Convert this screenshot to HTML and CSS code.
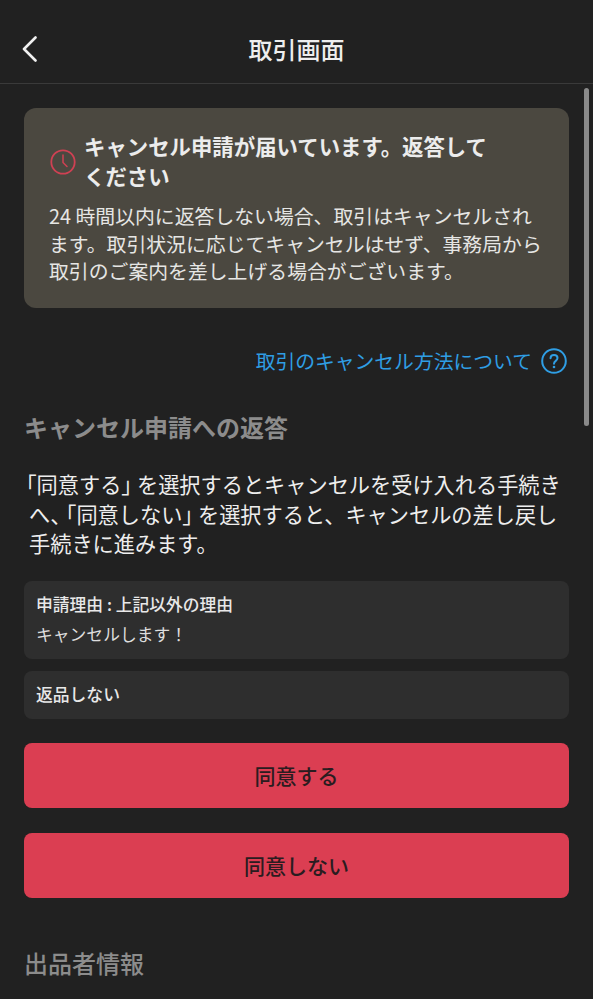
FILE: index.html
```html
<!DOCTYPE html>
<html lang="ja">
<head>
<meta charset="utf-8">
<title>取引画面</title>
<link rel="stylesheet" href="styles.css">
</head>
<body>
<div class="screen">
  <header class="topbar">
    <svg class="back" width="15" height="26" viewBox="0 0 15 26"><path d="M13.500 1.500 2 13 13.500 24.500" fill="none" stroke="#f0f0f0" stroke-width="2.600" stroke-linecap="round" stroke-linejoin="round"/></svg>
    <h1 class="title">取引画面</h1>
  </header>
  <div class="scrollthumb"></div>
  <main class="content">
    <section class="notice">
      <div class="notice-head">
        <svg class="clock" width="26" height="26" viewBox="0 0 26 26"><circle cx="13" cy="13" r="11.700" fill="none" stroke="#cf4153" stroke-width="1.800"/><path d="M13 6v7.500l4 4" fill="none" stroke="#cf4153" stroke-width="1.500" stroke-linecap="round" stroke-linejoin="round"/></svg>
        <h2 class="notice-title">キャンセル申請が届いています。返答して<br>ください</h2>
      </div>
      <p class="notice-body">24 時間以内に返答しない場合、取引はキャンセルされ<br>ます。取引状況に応じてキャンセルはせず、事務局から<br>取引のご案内を差し上げる場合がございます。</p>
    </section>
    <div class="help">
      <span class="help-text">取引のキャンセル方法について</span>
      <svg class="help-icon" width="26" height="26" viewBox="0 0 26 26"><circle cx="13" cy="13" r="11.800" fill="none" stroke="#2f9ee4" stroke-width="2"/><path d="M9.500 10.200c0-2 1.500-3.300 3.500-3.300s3.500 1.300 3.500 3.200c0 2.800-3.500 2.800-3.500 5.700" fill="none" stroke="#2f9ee4" stroke-width="2" stroke-linecap="round"/><circle cx="13" cy="19" r="1.300" fill="#2f9ee4"/></svg>
    </div>
    <h2 class="section-title first">キャンセル申請への返答</h2>
    <p class="lead"><span class="hang"><span class="narrow">「</span>同意する<span class="narrow close">」</span>を選択するとキャンセルを受け入れる手続き</span><br>へ<span class="narrow comma">、</span><span class="narrow">「</span>同意しない<span class="narrow close">」</span>を選択すると、キャンセルの差し戻し<br>手続きに進みます。</p>
    <div class="info reason">
      <div class="info-strong">申請理由 : 上記以外の理由</div>
      <div class="info-text">キャンセルします！</div>
    </div>
    <div class="info return">
      <div class="info-strong">返品しない</div>
    </div>
    <button class="action agree">同意する</button>
    <button class="action decline">同意しない</button>
    <h2 class="section-title seller">出品者情報</h2>
  </main>
</div>
</body>
</html>
```

FILE: styles.css
```css
* { box-sizing: border-box; }
html, body { margin: 0; padding: 0; }
body {
  background: #212121;
  color: #eeeeee;
  font-family: "Noto Sans CJK JP", "Noto Sans", sans-serif;
  overflow: hidden;
}
.screen { position: relative; width: 593px; height: 999px; overflow: hidden; }
.topbar {
  position: relative;
  height: 84px;
  padding-top: 15px;
  display: flex;
  align-items: center;
  justify-content: center;
  border-bottom: 1px solid #3a3a3a;
}
.back { position: absolute; left: 22px; top: 36px; }
.title { margin: 0; font-size: 24px; line-height: 34px; font-weight: 500; color: #eeeeee; }
.scrollthumb {
  position: absolute;
  left: 584px; top: 88px;
  width: 5px; height: 338px;
  border-radius: 3px;
  background: #8a8a8a;
}
.content { padding: 24px 24px 0; }
.notice {
  height: 200px;
  padding: 23px 24px 0 24px;
  background: #4b4840;
  border-radius: 12px;
}
.notice-head { display: flex; align-items: center; gap: 8px; }
.clock { flex: none; margin: 2px 0 0 2px; }
.notice-title { margin: 0; font-size: 21.400px; line-height: 29.500px; font-weight: 700; color: #ececec; white-space: nowrap; }
.notice-body { margin: 12px 0 0 1px; font-size: 19.850px; line-height: 27.500px; color: #e6e6e4; white-space: nowrap; }
.help { margin-top: 39px; height: 28px; display: flex; align-items: center; justify-content: flex-end; gap: 9px; padding-right: 2px; }
.help-text { font-size: 19.800px; line-height: 28px; color: #2f9ee4; white-space: nowrap; }
.help-icon { flex: none; }
.section-title { margin: 0; font-size: 24px; line-height: 32px; font-weight: 700; color: #8c8c8c; white-space: nowrap; }
.section-title.first { margin-top: 36px; }
.lead { margin: 26px 0 0 5px; font-size: 21.200px; line-height: 29.500px; color: #eeeeee; white-space: nowrap; }
.hang { margin-left: -3px; }
.narrow { font-feature-settings: "halt"; }
.close { margin-right: 5px; }
.comma { margin-right: 5px; }
.info { background: #2e2e2e; border-radius: 8px; padding: 0 12px; }
.reason { margin-top: 23px; height: 78px; padding-top: 11px; }
.return { margin-top: 12px; height: 48px; padding-top: 11px; }
.info-strong { font-size: 16.800px; line-height: 24px; font-weight: 500; color: #e8e8e8; }
.info-text { margin-top: 6px; font-size: 16.800px; line-height: 24px; color: #dddddd; }
.action {
  display: block;
  width: 100%;
  height: 65px;
  border: 0;
  border-radius: 8px;
  background: #db3e52;
  color: #2a1c20;
  font-family: inherit;
  font-size: 21px;
  font-weight: 500;
}
.agree { margin-top: 24px; }
.decline { margin-top: 25px; }
.section-title.seller { margin-top: 49px; font-weight: 500; }
```
